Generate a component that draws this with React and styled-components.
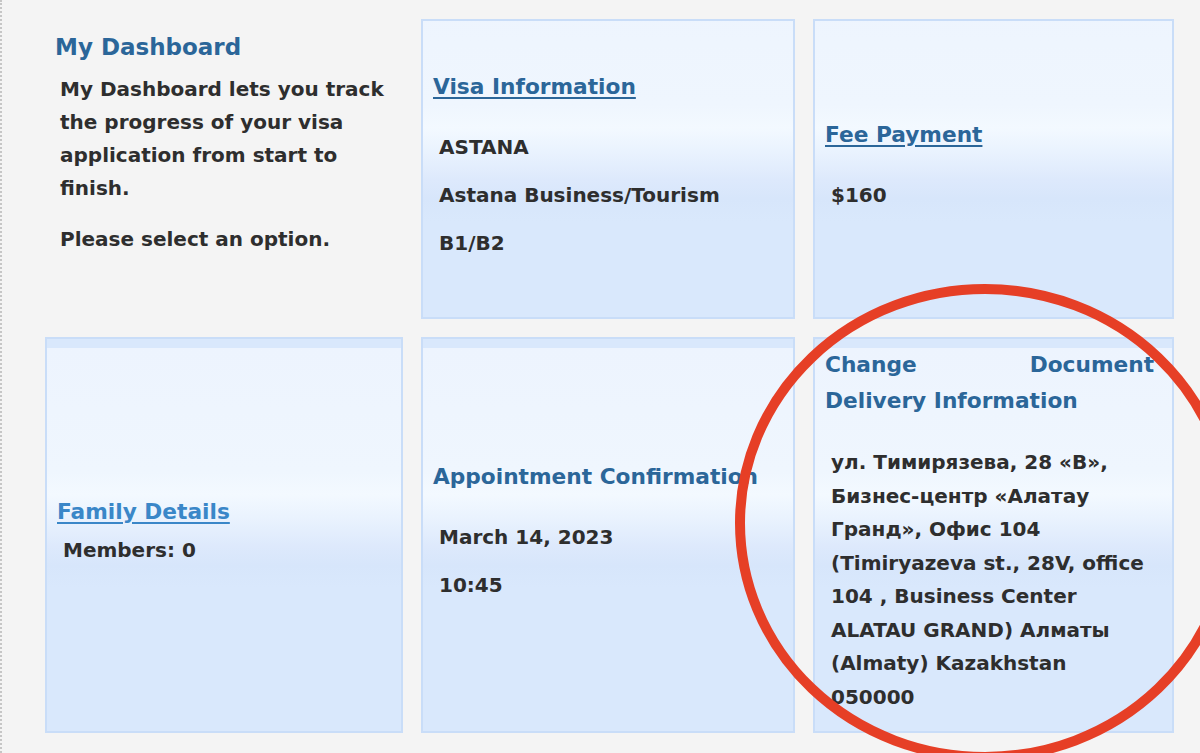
import React from 'react';
import styled, { createGlobalStyle } from 'styled-components';

const GlobalStyle = createGlobalStyle`
  html, body { margin: 0; padding: 0; background: #f4f4f4; }
  body { font-family: "DejaVu Sans", Verdana, sans-serif; }
`;

const Page = styled.div`
  position: relative;
  width: 1200px;
  height: 753px;
  overflow: hidden;
  box-sizing: border-box;
  border-left: 2px dotted #c6c6c6;
  background: #f4f4f4;
  padding: 19px 0 0 43px;
`;

const Grid = styled.div`
  display: grid;
  grid-template-columns: 358px 374px 361px;
  grid-template-rows: 300px 396px;
  column-gap: 18px;
  row-gap: 18px;
`;

const Intro = styled.div`
  padding: 13px 0 0 10px;
  color: #2e2e2e;
`;

const IntroTitle = styled.h2`
  margin: 0;
  font-size: 23px;
  line-height: 30px;
  font-weight: bold;
  color: #2b6699;
`;

const IntroText = styled.p`
  margin: ${(p) => (p.$first ? '11px' : '18px')} 0 0 5px;
  font-size: 20px;
  line-height: 33px;
  font-weight: bold;
`;

const Card = styled.div`
  box-sizing: border-box;
  border: 2px solid #c9ddf8;
  background-color: #d9e8fc;
  background-image: linear-gradient(
    to bottom,
    #edf4fe 0%,
    #eff6fe 33%,
    #f3f9ff 39%,
    #eaf3fe 45%,
    #dde9fc 53%,
    #d7e6fb 58%,
    #d9e8fc 64%,
    #d9e8fc 100%
  );
  background-size: 100% 375px;
  background-position: center;
  background-repeat: no-repeat;
  display: flex;
  flex-direction: column;
  justify-content: center;
  padding: 0 18px 9px 10px;
  color: #2e2e2e;
`;

const CardTitle = styled.a`
  display: block;
  font-size: 21.7px;
  line-height: 36px;
  font-weight: bold;
  color: ${(p) => (p.$light ? '#3a87c8' : '#2b6699')};
  text-decoration: ${(p) => (p.$underline ? 'underline' : 'none')};
  text-decoration-thickness: 2px;
  text-underline-offset: 3px;
  text-align: justify;
  cursor: pointer;
`;

const Item = styled.p`
  margin: ${(p) => (p.$gap != null ? `${p.$gap}px` : '15px')} 0 0 6px;
  font-size: 20px;
  line-height: ${(p) => (p.$tight ? '33.5px' : '33px')};
  font-weight: bold;
`;

const Overlay = styled.svg`
  position: absolute;
  top: 0;
  left: -2px;
  width: 1200px;
  height: 753px;
  pointer-events: none;
`;

export default function App() {
  return (
    <>
      <GlobalStyle />
      <Page>
        <Grid>
          <Intro>
            <IntroTitle>My Dashboard</IntroTitle>
            <IntroText $first>
              My Dashboard lets you track
              <br />
              the progress of your visa
              <br />
              application from start to
              <br />
              finish.
            </IntroText>
            <IntroText>Please select an option.</IntroText>
          </Intro>

          <Card>
            <CardTitle $underline>Visa Information</CardTitle>
            <Item $gap={26}>ASTANA</Item>
            <Item>Astana Business/Tourism</Item>
            <Item>B1/B2</Item>
          </Card>

          <Card>
            <CardTitle $underline>Fee Payment</CardTitle>
            <Item $gap={26}>$160</Item>
          </Card>

          <Card>
            <CardTitle $underline $light>Family Details</CardTitle>
            <Item $gap={4}>Members: 0</Item>
          </Card>

          <Card>
            <CardTitle>Appointment Confirmation</CardTitle>
            <Item $gap={26}>March 14, 2023</Item>
            <Item>10:45</Item>
          </Card>

          <Card>
            <CardTitle>Change Document Delivery Information</CardTitle>
            <Item $gap={27} $tight>
              ул. Тимирязева, 28 «В»,
              <br />
              Бизнес-центр «Алатау
              <br />
              Гранд», Офис 104
              <br />
              (Timiryazeva st., 28V, office
              <br />
              104 , Business Center
              <br />
              ALATAU GRAND) Алматы
              <br />
              (Almaty) Kazakhstan
              <br />
              050000
            </Item>
          </Card>
        </Grid>
        <Overlay viewBox="0 0 1200 753">
          <ellipse cx="985" cy="523" rx="245" ry="234" fill="none" stroke="#e63f26" strokeWidth="10" />
        </Overlay>
      </Page>
    </>
  );
}
